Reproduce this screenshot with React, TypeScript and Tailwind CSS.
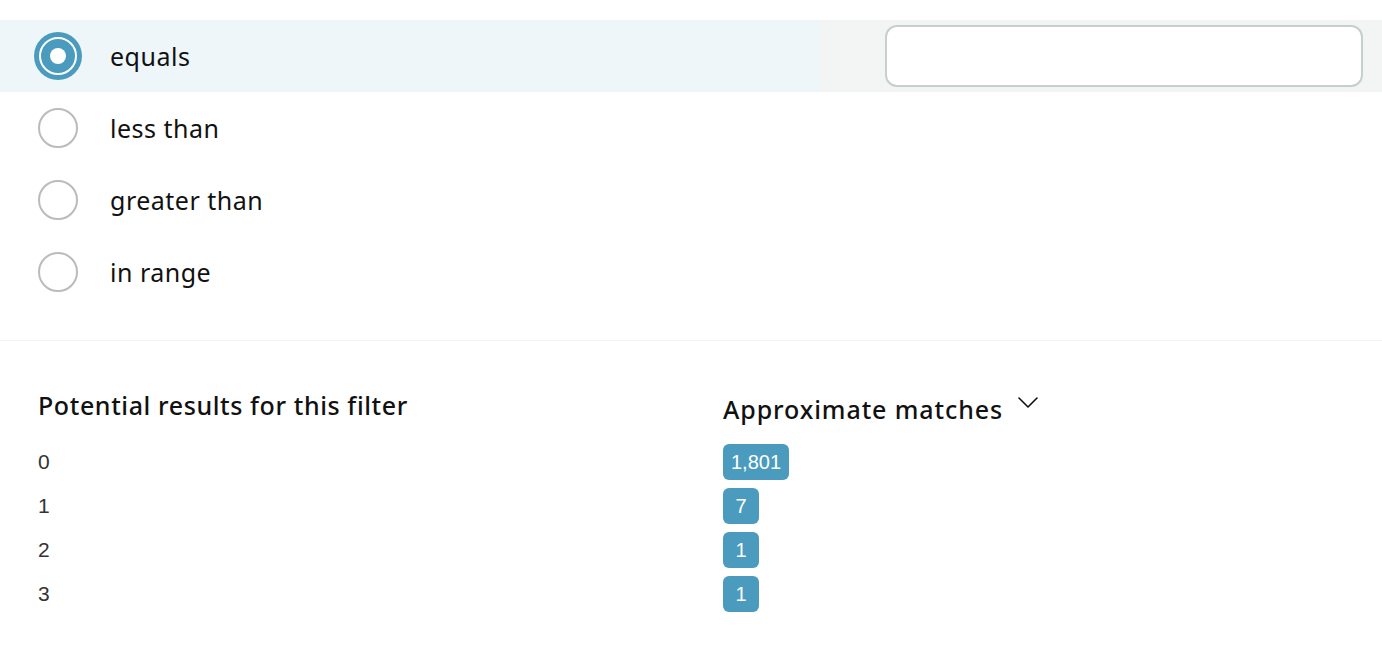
const OPTIONS = ['equals', 'less than', 'greater than', 'in range'];

const RESULTS = [
    { value: '0', count: '1,801' },
    { value: '1', count: '7' },
    { value: '2', count: '1' },
    { value: '3', count: '1' },
];

function Radio({ checked }: { checked: boolean }) {
    if (checked) {
        return (
            <div className="w-[48px] h-[48px] rounded-full bg-[#4a9bbd] flex items-center justify-center shrink-0 -mx-[4px]">
                <div className="w-[38px] h-[38px] rounded-full border-2 border-white flex items-center justify-center">
                    <div className="w-[16px] h-[16px] rounded-full bg-white" />
                </div>
            </div>
        );
    }
    return <div className="w-[40px] h-[40px] rounded-full border-2 border-[#b8bcbd] bg-white shrink-0" />;
}

export default function App() {
    return (
        <div className="w-[1382px] h-[648px] bg-white text-[#111] overflow-hidden" style={{ fontFamily: "'Noto Sans', sans-serif" }}>
            <div className="pt-[20px] pb-[32px]">
                {OPTIONS.map((label, i) => (
                    <div key={label} className="flex h-[72px]">
                        <div className={`w-[820px] flex items-center pl-[38px] ${i === 0 ? 'bg-[#eef6fa]' : ''}`}>
                            <Radio checked={i === 0} />
                            <span className="ml-[32px] text-[25px] tracking-[0.5px] mt-[2px]">{label}</span>
                        </div>
                        <div className={`flex-1 flex items-center pl-[65px] pr-[19px] ${i === 0 ? 'bg-[#f3f4f4]' : ''}`}>
                            {i === 0 && (
                                <input className="w-full h-[62px] rounded-[12px] border-2 border-[#c5cfcf] bg-white outline-none px-4 text-[20px]" />
                            )}
                        </div>
                    </div>
                ))}
            </div>

            <div className="border-t border-[#f1f2f2] px-[38px] pt-[46px] flex">
                <div className="w-[685px]">
                    <h2 className="text-[25px] font-medium h-[36px] leading-[36px] mb-[17px] tracking-[0.6px]">Potential results for this filter</h2>
                    {RESULTS.map(r => (
                        <div key={r.value} className="h-[44px] flex items-center text-[21px] text-[#333]" style={{ fontFamily: "'Liberation Sans', Arial, sans-serif" }}>
                            {r.value}
                        </div>
                    ))}
                </div>
                <div>
                    <div className="flex items-start h-[36px] mb-[17px] pt-[4px]">
                        <h2 className="text-[25px] font-medium leading-[36px] tracking-[0.9px]">Approximate matches</h2>
                        <svg className="ml-[15px] mt-[6px]" width="20" height="11" viewBox="0 0 20 11" fill="none">
                            <polyline points="1,1 10,10 19,1" stroke="#111" strokeWidth="1.6" strokeLinecap="round" strokeLinejoin="round" />
                        </svg>
                    </div>
                    {RESULTS.map(r => (
                        <div key={r.value} className="h-[44px] flex items-center">
                            <span
                                className="h-[36px] min-w-[36px] px-[8px] rounded-[6px] bg-[#4a9bbd] text-white text-[20px] flex items-center justify-center"
                                style={{ fontFamily: "'Liberation Sans', Arial, sans-serif" }}
                            >
                                {r.count}
                            </span>
                        </div>
                    ))}
                </div>
            </div>
        </div>
    );
}
